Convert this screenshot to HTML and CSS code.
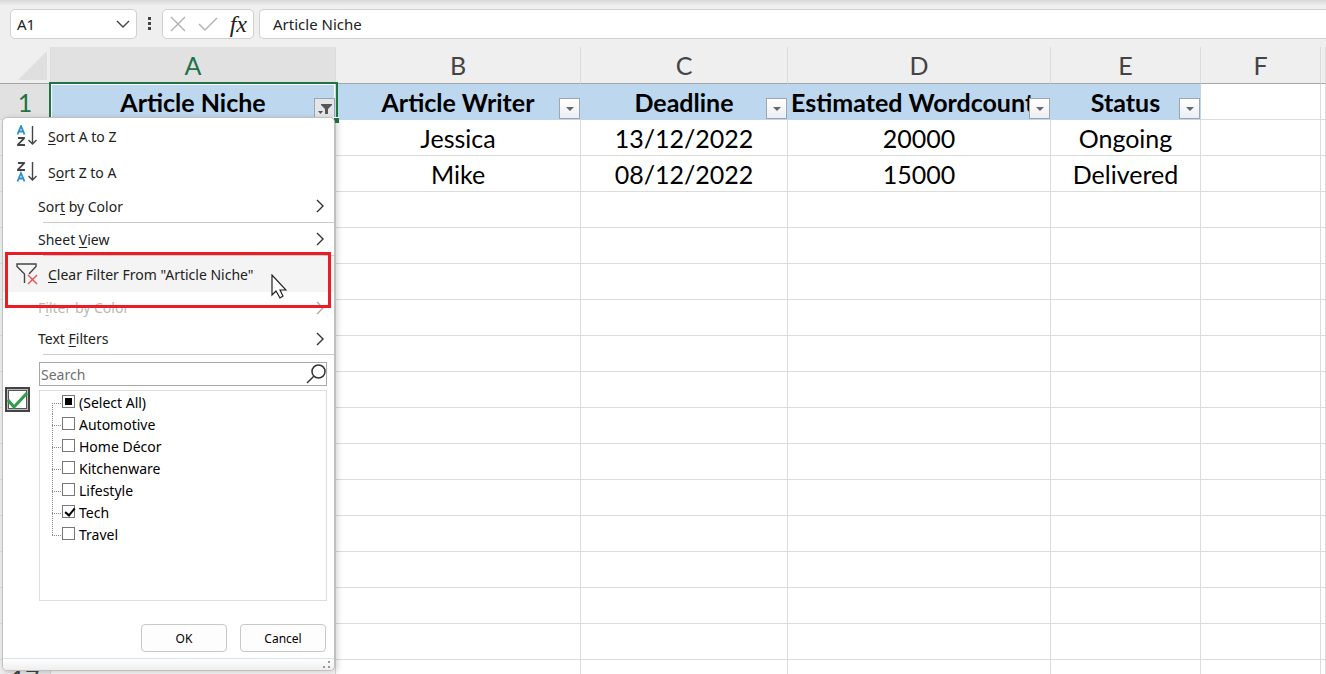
FILE: index.html
```html
<!DOCTYPE html>
<html lang="en">
<head>
  <meta charset="UTF-8">
  <title>Article Niche</title>
  <meta name="viewport" content="width=device-width, initial-scale=1.0">
  <link rel="stylesheet" href="styles.css">
</head>
<body>

<!-- FORMULA BAR -->
<header class="formula-bar">
  <div class="name-box">
    <input type="text" value="A1" aria-label="Name Box">
    <button type="button" aria-label="Open name list">
      <svg width="14" height="8" viewBox="0 0 14 8"><path d="M1 1l6 6 6-6" fill="none" stroke="#444" stroke-width="1.4"/></svg>
    </button>
  </div>
  <svg class="dots" width="4" height="14" viewBox="0 0 4 14"><path d="M0 0h3v3H0zM0 5h3v3H0zM0 10h3v3H0z" fill="#444"/></svg>
  <div class="fx-box">
    <button type="button" aria-label="Cancel entry">
      <svg width="16" height="16" viewBox="0 0 16 16"><path d="M1 1l14 14M15 1L1 15" fill="none" stroke="#b0b0b0" stroke-width="1.4"/></svg>
    </button>
    <button type="button" aria-label="Enter">
      <svg width="20" height="14" viewBox="0 0 20 14"><path d="M1 7l6 6L19 1" fill="none" stroke="#b0b0b0" stroke-width="1.4"/></svg>
    </button>
    <button type="button" class="fx" aria-label="Insert function">fx</button>
  </div>
  <input class="formula" type="text" value="Article Niche" aria-label="Formula">
</header>

<!-- SHEET -->
<main class="sheet">
  <table class="grid">
    <colgroup>
      <col class="col-num"><col class="col-a"><col class="col-b"><col class="col-c"><col class="col-d"><col class="col-e"><col class="col-f"><col>
    </colgroup>
    <thead>
      <tr>
        <th class="corner"><svg width="29" height="29" viewBox="0 0 29 29"><path d="M29 0v29H0z" fill="#dfdfdf"/></svg></th>
        <th class="active">A</th><th>B</th><th>C</th><th>D</th><th>E</th><th>F</th><th></th>
      </tr>
    </thead>
    <tbody>
      <tr class="titles">
        <th class="active">1</th>
        <td class="selected">Article Niche
          <button type="button" class="drop filtered" aria-label="Filter Article Niche">
            <svg width="14" height="12" viewBox="0 0 14 12"><path d="M3 1h11v1l-4 4v5H7V6L3 2zM0 8h5L2.500 11z" fill="#555"/></svg>
          </button>
          <span class="handle"></span>
        </td>
        <td>Article Writer<button type="button" class="drop" aria-label="Filter Article Writer"><svg width="8" height="4" viewBox="0 0 8 4"><path d="M0 0h8L4 4z" fill="#666"/></svg></button></td>
        <td>Deadline<button type="button" class="drop" aria-label="Filter Deadline"><svg width="8" height="4" viewBox="0 0 8 4"><path d="M0 0h8L4 4z" fill="#666"/></svg></button></td>
        <td class="long">Estimated Wordcount<button type="button" class="drop" aria-label="Filter Estimated Wordcount"><svg width="8" height="4" viewBox="0 0 8 4"><path d="M0 0h8L4 4z" fill="#666"/></svg></button></td>
        <td>Status<button type="button" class="drop" aria-label="Filter Status"><svg width="8" height="4" viewBox="0 0 8 4"><path d="M0 0h8L4 4z" fill="#666"/></svg></button></td>
        <td class="blank"></td><td class="blank"></td>
      </tr>
      <tr><th></th><td></td><td>Jessica</td><td>13/12/2022</td><td>20000</td><td>Ongoing</td><td></td><td></td></tr>
      <tr><th></th><td></td><td>Mike</td><td>08/12/2022</td><td>15000</td><td>Delivered</td><td></td><td></td></tr>
      <tr><th></th><td></td><td></td><td></td><td></td><td></td><td></td><td></td></tr>
      <tr><th></th><td></td><td></td><td></td><td></td><td></td><td></td><td></td></tr>
      <tr><th></th><td></td><td></td><td></td><td></td><td></td><td></td><td></td></tr>
      <tr><th></th><td></td><td></td><td></td><td></td><td></td><td></td><td></td></tr>
      <tr><th></th><td></td><td></td><td></td><td></td><td></td><td></td><td></td></tr>
      <tr><th></th><td></td><td></td><td></td><td></td><td></td><td></td><td></td></tr>
      <tr><th></th><td></td><td></td><td></td><td></td><td></td><td></td><td></td></tr>
      <tr><th></th><td></td><td></td><td></td><td></td><td></td><td></td><td></td></tr>
      <tr><th></th><td></td><td></td><td></td><td></td><td></td><td></td><td></td></tr>
      <tr><th></th><td></td><td></td><td></td><td></td><td></td><td></td><td></td></tr>
      <tr><th></th><td></td><td></td><td></td><td></td><td></td><td></td><td></td></tr>
      <tr><th></th><td></td><td></td><td></td><td></td><td></td><td></td><td></td></tr>
      <tr><th></th><td></td><td></td><td></td><td></td><td></td><td></td><td></td></tr>
      <tr><th>17</th><td></td><td></td><td></td><td></td><td></td><td></td><td></td></tr>
    </tbody>
  </table>
</main>

<!-- FILTER MENU -->
<form class="menu">
  <button type="button" class="item tall">
    <svg width="22" height="22" viewBox="0 0 22 22" fill="none" stroke-width="1.8"><path d="M1.500 9.500L5 1l3.500 8.500M2.500 6.500h5" stroke="#2b8fd0"/><path d="M2 13h6v.5L2 19.500v.5h7" stroke="#444"/><path d="M16.500 1v18M12.500 15l4 4 4-4" stroke="#444" stroke-width="1.4"/></svg>
    <span><u>S</u>ort A to Z</span>
  </button>
  <button type="button" class="item tall">
    <svg width="22" height="22" viewBox="0 0 22 22" fill="none" stroke-width="1.8"><path d="M2 2h6v.5L2 8.500V9h7" stroke="#444"/><path d="M1.500 20.500L5 12l3.500 8.500M2.500 17.500h5" stroke="#2b8fd0"/><path d="M16.500 1v18M12.500 15l4 4 4-4" stroke="#444" stroke-width="1.4"/></svg>
    <span>S<u>o</u>rt Z to A</span>
  </button>
  <button type="button" class="item sub"><span>Sor<u>t</u> by Color</span><svg class="arrow" width="8" height="14" viewBox="0 0 8 14"><path d="M1 1l6 6-6 6"/></svg></button>
  <hr>
  <button type="button" class="item sub"><span>Sheet <u>V</u>iew</span><svg class="arrow" width="8" height="14" viewBox="0 0 8 14"><path d="M1 1l6 6-6 6"/></svg></button>
  <hr>
  <button type="button" class="item tall hover">
    <svg width="22" height="22" viewBox="0 0 22 22" fill="none" stroke-width="1.4"><path d="M8.500 20v-9L1 3.500V1h19v2.500L13 11" stroke="#444"/><path d="M12 12l9 9M21 12l-9 9" stroke="#e8504f"/></svg>
    <span><u>C</u>lear Filter From "Article Niche"</span>
  </button>
  <button type="button" class="item sub short" disabled><span>F<u>i</u>lter by Color</span><svg class="arrow" width="8" height="14" viewBox="0 0 8 14"><path d="M1 1l6 6-6 6"/></svg></button>
  <button type="button" class="item sub short"><span>Text <u>F</u>ilters</span><svg class="arrow" width="8" height="14" viewBox="0 0 8 14"><path d="M1 1l6 6-6 6"/></svg></button>
  <hr>

  <div class="search">
    <input type="text" placeholder="Search" aria-label="Search">
    <svg width="20" height="20" viewBox="0 0 20 20" fill="none" stroke="#333" stroke-width="1.5"><circle cx="12.500" cy="7.500" r="6.500"/><path d="M8 12l-7 7"/></svg>
  </div>

  <div class="values">
    <span class="mark"><svg width="21" height="21" viewBox="0 0 21 21"><path d="M1 11l6 7L20 4" fill="none" stroke="#2e9e49" stroke-width="3"/></svg></span>
    <ul class="tree">
      <li><label><input type="checkbox" class="mixed">(Select All)</label></li>
      <li><label><input type="checkbox">Automotive</label></li>
      <li><label><input type="checkbox">Home Décor</label></li>
      <li><label><input type="checkbox">Kitchenware</label></li>
      <li><label><input type="checkbox">Lifestyle</label></li>
      <li><label><input type="checkbox" checked>Tech</label></li>
      <li><label><input type="checkbox">Travel</label></li>
    </ul>
  </div>

  <div class="actions">
    <button type="submit">OK</button>
    <button type="button">Cancel</button>
  </div>
  <div class="grip"><svg width="8" height="8" viewBox="0 0 8 8"><path d="M5 0h2v2H5zM0 5h2v2H0zM5 5h2v2H5z" fill="#999"/></svg></div>
  <div class="highlight"></div>
  <svg class="pointer" width="16" height="25" viewBox="0 0 16 25"><path d="M1 1v20l4-4 4 7 3-2-3-6h6z" fill="#fff" stroke="#222" stroke-width="1.200"/></svg>
</form>

</body>
</html>
```
FILE: styles.css
```css
* {
  box-sizing: border-box;
}

body {
  margin: 0;
  height: 100vh;
  overflow: hidden;
  position: relative;
  background: #efefef;
  font-family: "Noto Sans", "Open Sans", sans-serif;
  font-size: 14px;
  color: #222;
}

button, input {
  font: inherit;
  color: inherit;
  margin: 0;
}

button {
  padding: 0;
  border: none;
  background: none;
}

svg {
  display: block;
  flex: none;
}

/* formula bar */
.formula-bar {
  display: flex;
  align-items: center;
  height: 47px;
  padding: 1px 0 0 10px;
  background: linear-gradient(#d8d8d8, #efefef 6px);
  font-size: 15px;
}

.name-box, .fx-box, .formula {
  height: 30px;
  border: 1px solid #d0d0d0;
  border-radius: 5px;
  background: #fff;
}

.name-box {
  display: flex;
  align-items: center;
  width: 127px;
  padding: 0 6px;
}

.name-box input {
  flex: 1;
  min-width: 0;
  padding: 0;
  border: none;
}

.dots {
  margin: 0 10px 0 11px;
}

.fx-box {
  display: flex;
  align-items: center;
  justify-content: space-between;
  width: 92px;
  padding: 0 6px 0 7px;
  margin-right: 5px;
}

.fx {
  font: italic 24px/24px "Liberation Serif", serif;
  color: #222;
}

.formula {
  flex: 1;
  padding: 0 13px;
  border-right: none;
  border-radius: 5px 0 0 5px;
}

/* grid */
.grid {
  width: 100%;
  table-layout: fixed;
  border-collapse: separate;
  border-spacing: 0;
  font-family: Lato, "Noto Sans", sans-serif;
  font-size: 25px;
  line-height: 34px;
  color: #000;
}

.col-num { width: 51px; }
.col-a { width: 285px; }
.col-b { width: 245px; }
.col-c { width: 207px; }
.col-d { width: 263px; }
.col-e { width: 150px; }
.col-f { width: 120px; }

.grid th, .grid td {
  height: 36px;
  padding: 0;
  text-align: center;
  white-space: nowrap;
  border-right: 1px solid #dcdcdc;
  border-bottom: 1px solid #dcdcdc;
}

.grid td {
  position: relative;
  background: #fff;
}

.grid th {
  font-weight: normal;
  color: #444;
  background: #efefef;
}

.grid thead th {
  height: 37px;
  border-bottom-color: #a5a5a5;
}

.grid th.active {
  background: #e1e1e1;
  color: #217346;
}

.grid .corner svg {
  margin-left: 18px;
}

.titles td {
  font-weight: bold;
  background: #bdd7ee;
  border-color: #bdd7ee;
}

.titles .blank {
  background: #fff;
  border-color: #dcdcdc;
}

.titles .long {
  text-align: left;
  padding-left: 3px;
}

.titles .selected {
  z-index: 1;
  outline: 2px solid #217346;
  box-shadow: inset 0 0 0 1px #fff;
}

.drop {
  position: absolute;
  right: 0;
  bottom: 0;
  display: flex;
  align-items: center;
  justify-content: center;
  width: 21px;
  height: 21px;
  border: 1px solid #a0a5ad;
  background: linear-gradient(#fff, #eceef2);
}

.filtered {
  background: #e3e5e8;
}

.handle {
  position: absolute;
  right: -4px;
  bottom: -4px;
  width: 6px;
  height: 6px;
  background: #217346;
  border: solid #fff;
  border-width: 1px 0 0 1px;
}

/* filter menu */
.menu {
  position: absolute;
  z-index: 2;
  top: 117px;
  left: 2px;
  width: 333px;
  border: 1px solid #c0c0c0;
  border-radius: 5px;
  background: #fff;
  box-shadow: 2px 2px 6px rgba(0, 0, 0, 0.2);
}

.item {
  display: flex;
  align-items: center;
  width: 100%;
  height: 32px;
  text-align: left;
}

.tall {
  height: 36px;
  padding-left: 13px;
  gap: 10px;
}

.sub {
  justify-content: space-between;
  padding: 0 10px 0 35px;
}

.short {
  height: 31px;
}

.item:disabled {
  color: #b8b8b8;
}

.hover {
  background: #f4f4f4;
}

.item u {
  text-underline-offset: 2px;
}

.arrow {
  fill: none;
  stroke: #333;
  stroke-width: 1.4;
}

.item:disabled .arrow {
  stroke: #aaa;
}

.menu hr {
  height: 1px;
  margin: 0 0 0 40px;
  border: none;
  background: #ccc;
}

.search {
  display: flex;
  align-items: center;
  height: 24px;
  margin: 7px 7px 4px 36px;
  border: 1px solid #a8a8a8;
}

.search input {
  flex: 1;
  min-width: 0;
  padding: 0 1px;
  border: none;
  outline: none;
  background: none;
}

.search input::placeholder {
  color: #707070;
}

.values {
  position: relative;
  height: 211px;
  margin: 0 7px 0 36px;
  border: 1px solid #dedede;
}

.mark {
  position: absolute;
  left: -35px;
  top: -4px;
  width: 25px;
  height: 25px;
  border: 2px solid #444;
  box-shadow: inset 0 0 0 1px #bbb, inset 0 0 0 2px #555;
}

.tree {
  list-style: none;
  margin: 0;
  padding: 1px 0 0 12px;
  color: #000;
}

.tree li {
  height: 22px;
  background:
    repeating-linear-gradient(90deg, #888 0 1px, transparent 1px 2px) 0 11px / 10px 1px no-repeat,
    repeating-linear-gradient(#888 0 1px, transparent 1px 2px) 0 0 / 1px 22px no-repeat;
}

.tree li:first-child {
  background-position: 0 11px, 0 11px;
}

.tree li:last-child {
  background-size: 10px 1px, 1px 11px;
}

.tree label {
  display: flex;
  align-items: center;
  gap: 4px;
  padding-left: 10px;
  line-height: 22px;
}

.tree input {
  appearance: none;
  width: 13px;
  height: 13px;
  margin-bottom: 4px;
  border: 1px solid #777;
  background: #fff;
}

.tree .mixed {
  background: #000;
  box-shadow: inset 0 0 0 2px #fff;
}

.tree input:checked::before {
  content: "";
  display: block;
  width: 4px;
  height: 8px;
  margin-left: 4px;
  border: solid #000;
  border-width: 0 2px 2px 0;
  transform: rotate(40deg);
}

.actions {
  display: flex;
  justify-content: flex-end;
  gap: 13px;
  padding: 23px 8px 6px;
}

.actions button {
  width: 86px;
  height: 28px;
  border: 1px solid #c8c8c8;
  border-radius: 4px;
  background: #fdfdfd;
  font-size: 12px;
  color: #000;
}

.grip {
  display: flex;
  align-items: center;
  justify-content: flex-end;
  height: 12px;
  padding-right: 3px;
  border-top: 1px solid #dbe5ec;
  border-radius: 0 0 5px 5px;
  background: linear-gradient(#fff, #eee);
}

/* drawn over the menu */
.highlight {
  position: absolute;
  left: 2px;
  top: 134px;
  width: 326px;
  height: 56px;
  border: 3px solid #ed1c24;
}

.pointer {
  position: absolute;
  left: 268px;
  top: 156px;
}
```
